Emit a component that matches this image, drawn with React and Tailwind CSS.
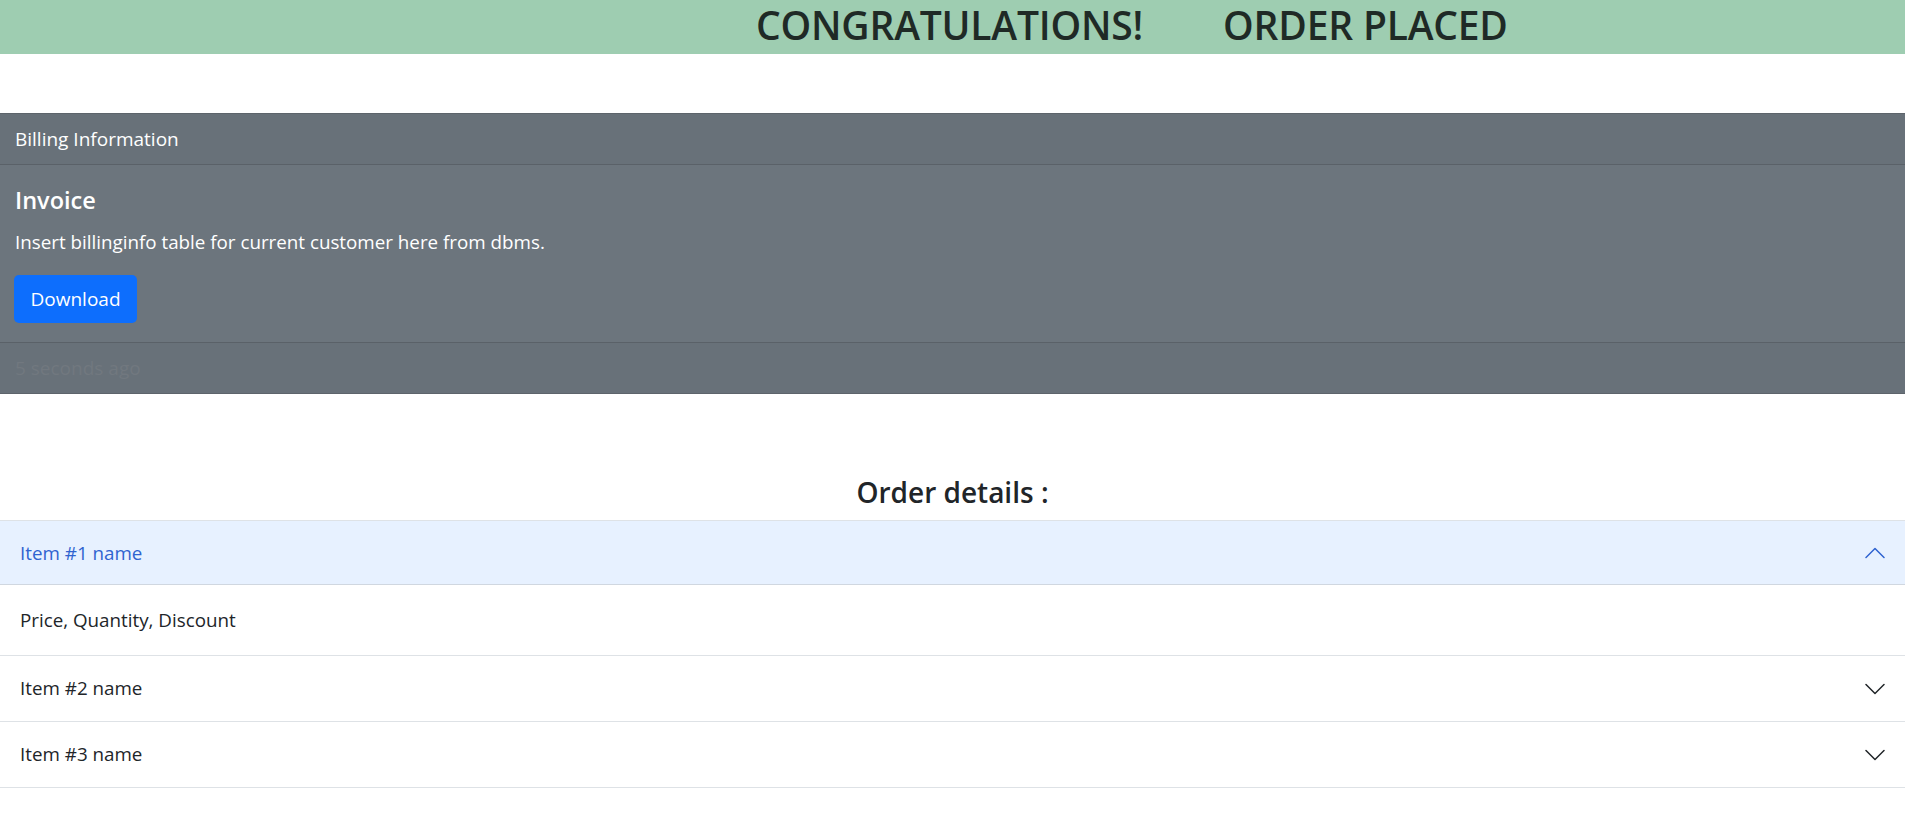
import React from "react";

const ChevronIcon = ({ up, className }) => (
  <svg viewBox="0 0 20 20" width="20" height="20" fill="none" className={className}>
    {up ? (
      <path d="M1 14.5L10 5.5L19 14.5" stroke="currentColor" strokeWidth="1.5" strokeLinecap="round" strokeLinejoin="round" />
    ) : (
      <path d="M1 5.5L10 14.5L19 5.5" stroke="currentColor" strokeWidth="1.5" strokeLinecap="round" strokeLinejoin="round" />
    )}
  </svg>
);

const items = [
  { name: "Item #1 name", open: true, body: "Price, Quantity, Discount" },
  { name: "Item #2 name", open: false },
  { name: "Item #3 name", open: false },
];

export default function App() {
  return (
    <div className="min-h-screen bg-white text-[#212529]" style={{ fontFamily: '"Open Sans", "Noto Sans", sans-serif' }}>
      {/* Banner */}
      <div className="h-[54px] bg-[#9ecdb1] flex items-start pl-[756px]">
        <h1 className="text-[39px] font-semibold leading-[50px] tracking-[-0.2px] text-[#1f2a26] flex gap-[80px]">
          <span>CONGRATULATIONS!</span>
          <span>ORDER PLACED</span>
        </h1>
      </div>

      {/* Billing card */}
      <div className="mt-[59px] bg-[#6c757d] border-y border-[#5d646b] text-white">
        <div className="h-[51px] px-[15px] flex items-center bg-black/[0.03] border-b border-[#5a6168] text-[19px]">
          Billing Information
        </div>
        <div className="px-[15px] pt-[19px] pb-[19px]">
          <h5 className="text-[23.5px] font-semibold leading-[32px]">Invoice</h5>
          <p className="text-[18.8px] leading-[28px] mt-[12px]">
            Insert billinginfo table for current customer here from dbms.
          </p>
          <button className="mt-[19px] h-[48px] w-[123px] -ml-px rounded-[5px] bg-[#0d6efd] text-[19px] text-white">
            Download
          </button>
        </div>
        <div className="h-[51px] px-[15px] flex items-center bg-black/[0.03] border-t border-[#5a6168] text-[19px] text-[#71787f]">
          5 seconds ago
        </div>
      </div>

      {/* Order details */}
      <h3 className="mt-[78px] text-center text-[28px] font-semibold leading-[40px]">Order details :</h3>

      <div className="mt-[8px] border-t border-[#dee2e6]">
        {items.map((item) => (
          <div key={item.name} className="border-b border-[#dee2e6]">
            <div
              className={
                item.open
                  ? "h-[64px] px-[20px] flex items-center justify-between bg-[#e7f1ff] text-[#2f63d0] shadow-[inset_0_-1px_0_#d0d7e0]"
                  : "h-[65px] px-[20px] flex items-center justify-between text-[#212529]"
              }
            >
              <span className="text-[18.8px]">{item.name}</span>
              <ChevronIcon up={item.open} />
            </div>
            {item.open && (
              <div className="h-[70px] px-[20px] flex items-center text-[18.8px]">{item.body}</div>
            )}
          </div>
        ))}
      </div>
    </div>
  );
}
